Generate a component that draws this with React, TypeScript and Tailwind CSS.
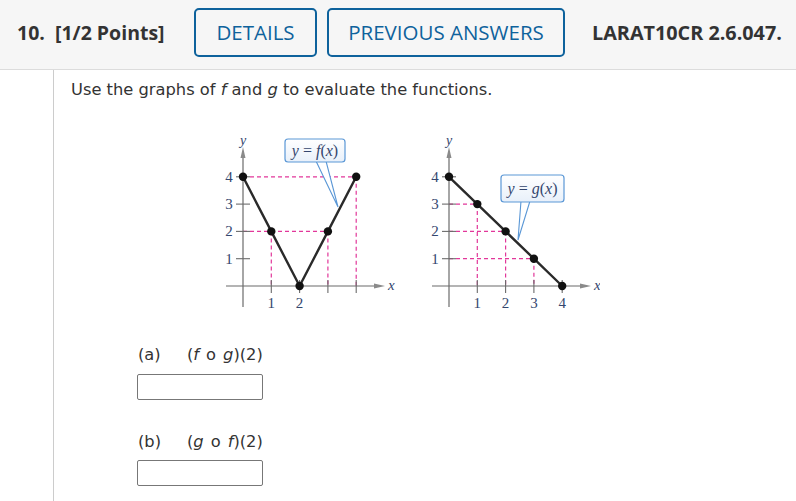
const MAGENTA = "#e2379a";
const INK = "#34466e";

// Page coords of the two plots (the svg viewBox starts at 200,130).
const F_OX = 243;
const G_OX = 449;
const OY = 286;
const UX = 28.3;
const UY = 27.3;

function px(ox: number, i: number) {
  return ox + UX * i;
}
function py(j: number) {
  return OY - UY * j;
}

function Axes({ ox }: { ox: number }) {
  return (
    <g>
      <line x1={ox} y1={307} x2={ox} y2={154} stroke="#6b6b6b" strokeWidth={1.2} />
      <polygon points={`${ox - 2.5},${158} ${ox + 2.5},${158} ${ox},${147}`} fill="#8a8a8a" />
      <line x1={ox - 17} y1={OY} x2={ox + 133} y2={OY} stroke="#6b6b6b" strokeWidth={1.2} />
      <polygon
        points={`${ox + 131},${OY - 2.5} ${ox + 131},${OY + 2.5} ${ox + 142},${OY}`}
        fill="#8a8a8a"
      />
      {[1, 2, 3, 4].map((j) => (
        <line key={"yt" + j} x1={ox - 7} y1={py(j)} x2={ox + 7} y2={py(j)} stroke="#6b6b6b" strokeWidth={1.1} />
      ))}
      {[1, 2, 3, 4].map((i) => (
        <line key={"xt" + i} x1={px(ox, i)} y1={OY - 6} x2={px(ox, i)} y2={OY + 7} stroke="#6b6b6b" strokeWidth={1.1} />
      ))}
      {[1, 2, 3, 4].map((j) => (
        <text key={"yl" + j} x={ox - 14} y={py(j) + 5} fontSize={15} fill={INK} textAnchor="middle">
          {j}
        </text>
      ))}
      <text x={ox} y={145} fontSize={14} fontStyle="italic" fill={INK} textAnchor="middle">
        y
      </text>
      <text x={ox + 145} y={OY + 4} fontSize={15} fontStyle="italic" fill={INK}>
        x
      </text>
    </g>
  );
}

function Dash({ x1, y1, x2, y2 }: { x1: number; y1: number; x2: number; y2: number }) {
  return <line x1={x1} y1={y1} x2={x2} y2={y2} stroke={MAGENTA} strokeWidth={1.2} strokeDasharray="4 3" />;
}

function Callout({ x, y, w, h, tail, fn }: { x: number; y: number; w: number; h: number; tail: string; fn: string }) {
  return (
    <g>
      <polygon points={tail} fill="#ffffff" stroke="#5a97d6" strokeWidth={1.1} />
      <rect x={x} y={y} width={w} height={h} rx={3} fill="url(#cb)" stroke="#5a97d6" strokeWidth={1.2} />
      <text x={x + w / 2} y={y + h / 2 + 5} fontSize={16} fill={INK} textAnchor="middle">
        <tspan fontStyle="italic">y</tspan> = <tspan fontStyle="italic">{fn}</tspan>(<tspan fontStyle="italic">x</tspan>)
      </text>
    </g>
  );
}

function Graphs() {
  const f = [4, 2, 0, 2, 4];
  const g = [4, 3, 2, 1, 0];
  return (
    <svg
      width={400}
      height={182}
      viewBox="200 130 400 182"
      style={{ fontFamily: '"Liberation Serif", "Times New Roman", serif' }}
    >
      <defs>
        <linearGradient id="cb" x1="0" y1="0" x2="0" y2="1">
          <stop offset="0" stopColor="#ffffff" />
          <stop offset="1" stopColor="#e8f0fa" />
        </linearGradient>
      </defs>

      {/* f */}
      <Dash x1={F_OX} y1={py(4)} x2={px(F_OX, 4)} y2={py(4)} />
      <Dash x1={F_OX} y1={py(2)} x2={px(F_OX, 3)} y2={py(2)} />
      <Dash x1={px(F_OX, 1)} y1={py(2)} x2={px(F_OX, 1)} y2={OY} />
      <Dash x1={px(F_OX, 3)} y1={py(2)} x2={px(F_OX, 3)} y2={OY} />
      <Dash x1={px(F_OX, 4)} y1={py(4)} x2={px(F_OX, 4)} y2={OY} />
      <Axes ox={F_OX} />
      <text x={px(F_OX, 1)} y={308} fontSize={15} fill={INK} textAnchor="middle">1</text>
      <text x={px(F_OX, 2)} y={308} fontSize={15} fill={INK} textAnchor="middle">2</text>
      <polyline
        points={f.map((v, i) => `${px(F_OX, i)},${py(v)}`).join(" ")}
        fill="none"
        stroke="#2a2a2a"
        strokeWidth={2.4}
      />
      {f.map((v, i) => (
        <circle key={"f" + i} cx={px(F_OX, i)} cy={py(v)} r={4.2} fill="#111" />
      ))}
      <Callout x={285} y={139} w={60} h={23} tail="316,161 326,161 338,207" fn="f" />

      {/* g */}
      <Dash x1={G_OX} y1={py(3)} x2={px(G_OX, 1)} y2={py(3)} />
      <Dash x1={G_OX} y1={py(2)} x2={px(G_OX, 2)} y2={py(2)} />
      <Dash x1={G_OX} y1={py(1)} x2={px(G_OX, 3)} y2={py(1)} />
      <Dash x1={px(G_OX, 1)} y1={py(3)} x2={px(G_OX, 1)} y2={OY} />
      <Dash x1={px(G_OX, 2)} y1={py(2)} x2={px(G_OX, 2)} y2={OY} />
      <Dash x1={px(G_OX, 3)} y1={py(1)} x2={px(G_OX, 3)} y2={OY} />
      <Axes ox={G_OX} />
      {[1, 2, 3, 4].map((i) => (
        <text key={"gx" + i} x={px(G_OX, i)} y={308} fontSize={15} fill={INK} textAnchor="middle">
          {i}
        </text>
      ))}
      <polyline
        points={g.map((v, i) => `${px(G_OX, i)},${py(v)}`).join(" ")}
        fill="none"
        stroke="#2a2a2a"
        strokeWidth={2.4}
      />
      {g.map((v, i) => (
        <circle key={"g" + i} cx={px(G_OX, i)} cy={py(v)} r={4.2} fill="#111" />
      ))}
      <Callout x={501} y={175} w={63} h={27} tail="521,201 530,201 518,240" fn="g" />
    </svg>
  );
}

function Part({ tag, children }: { tag: string; children: React.ReactNode }) {
  return (
    <div className="flex items-center leading-[20px]">
      <span className="w-[50px] pl-px">({tag})</span>
      <span>{children}</span>
    </div>
  );
}

function Compose({ a, b }: { a: string; b: string }) {
  return (
    <>
      (<i>{a}</i>
      <span className="mx-[7px]">o</span>
      <i>{b}</i>)(2)
    </>
  );
}

export default function App() {
  return (
    <div className="h-[501px] w-[796px] overflow-hidden bg-white">
      <header
        className="flex h-[70px] items-center border-b border-[#dcdcdc] bg-[#f6f6f6] pb-[4px] text-[#333]"
        style={{ fontFamily: '"Open Sans", sans-serif' }}
      >
        <span className="w-[194px] whitespace-pre pl-[17px] text-[19.5px] font-bold">10.  [1/2 Points]</span>
        <button className="flex h-[49px] w-[123px] items-center justify-center rounded-[5px] border-2 border-[#0e629c] text-[20.5px] text-[#0e629c]">
          DETAILS
        </button>
        <button className="ml-[10px] flex h-[49px] w-[238px] items-center justify-center rounded-[5px] border-2 border-[#0e629c] text-[20.5px] text-[#0e629c]">
          PREVIOUS ANSWERS
        </button>
        <span className="ml-[27px] text-[19.8px] font-bold">LARAT10CR 2.6.047.</span>
      </header>

      <div className="flex h-[431px]">
        <div className="w-[54px] shrink-0 border-r border-[#cccccc]" />
        <main
          className="flex-1 text-[16.3px] text-[#333]"
          style={{ fontFamily: '"DejaVu Sans", Verdana, sans-serif' }}
        >
          <p className="pl-[17px] pt-[10px] leading-[20px]">
            Use the graphs of <i>f</i> and <i>g</i> to evaluate the functions.
          </p>
          <div className="ml-[146px] mt-[30px]">
            <Graphs />
          </div>
          <div className="pl-[83px]">
            <div className="mt-[33px]">
              <Part tag="a">
                <Compose a="f" b="g" />
              </Part>
            </div>
            <div className="mt-[9px] h-[26px] w-[126px] rounded-[2px] border border-[#777]" />
            <div className="mt-[32px]">
              <Part tag="b">
                <Compose a="g" b="f" />
              </Part>
            </div>
            <div className="mt-[8px] h-[26px] w-[126px] rounded-[2px] border border-[#777]" />
          </div>
        </main>
      </div>
    </div>
  );
}
